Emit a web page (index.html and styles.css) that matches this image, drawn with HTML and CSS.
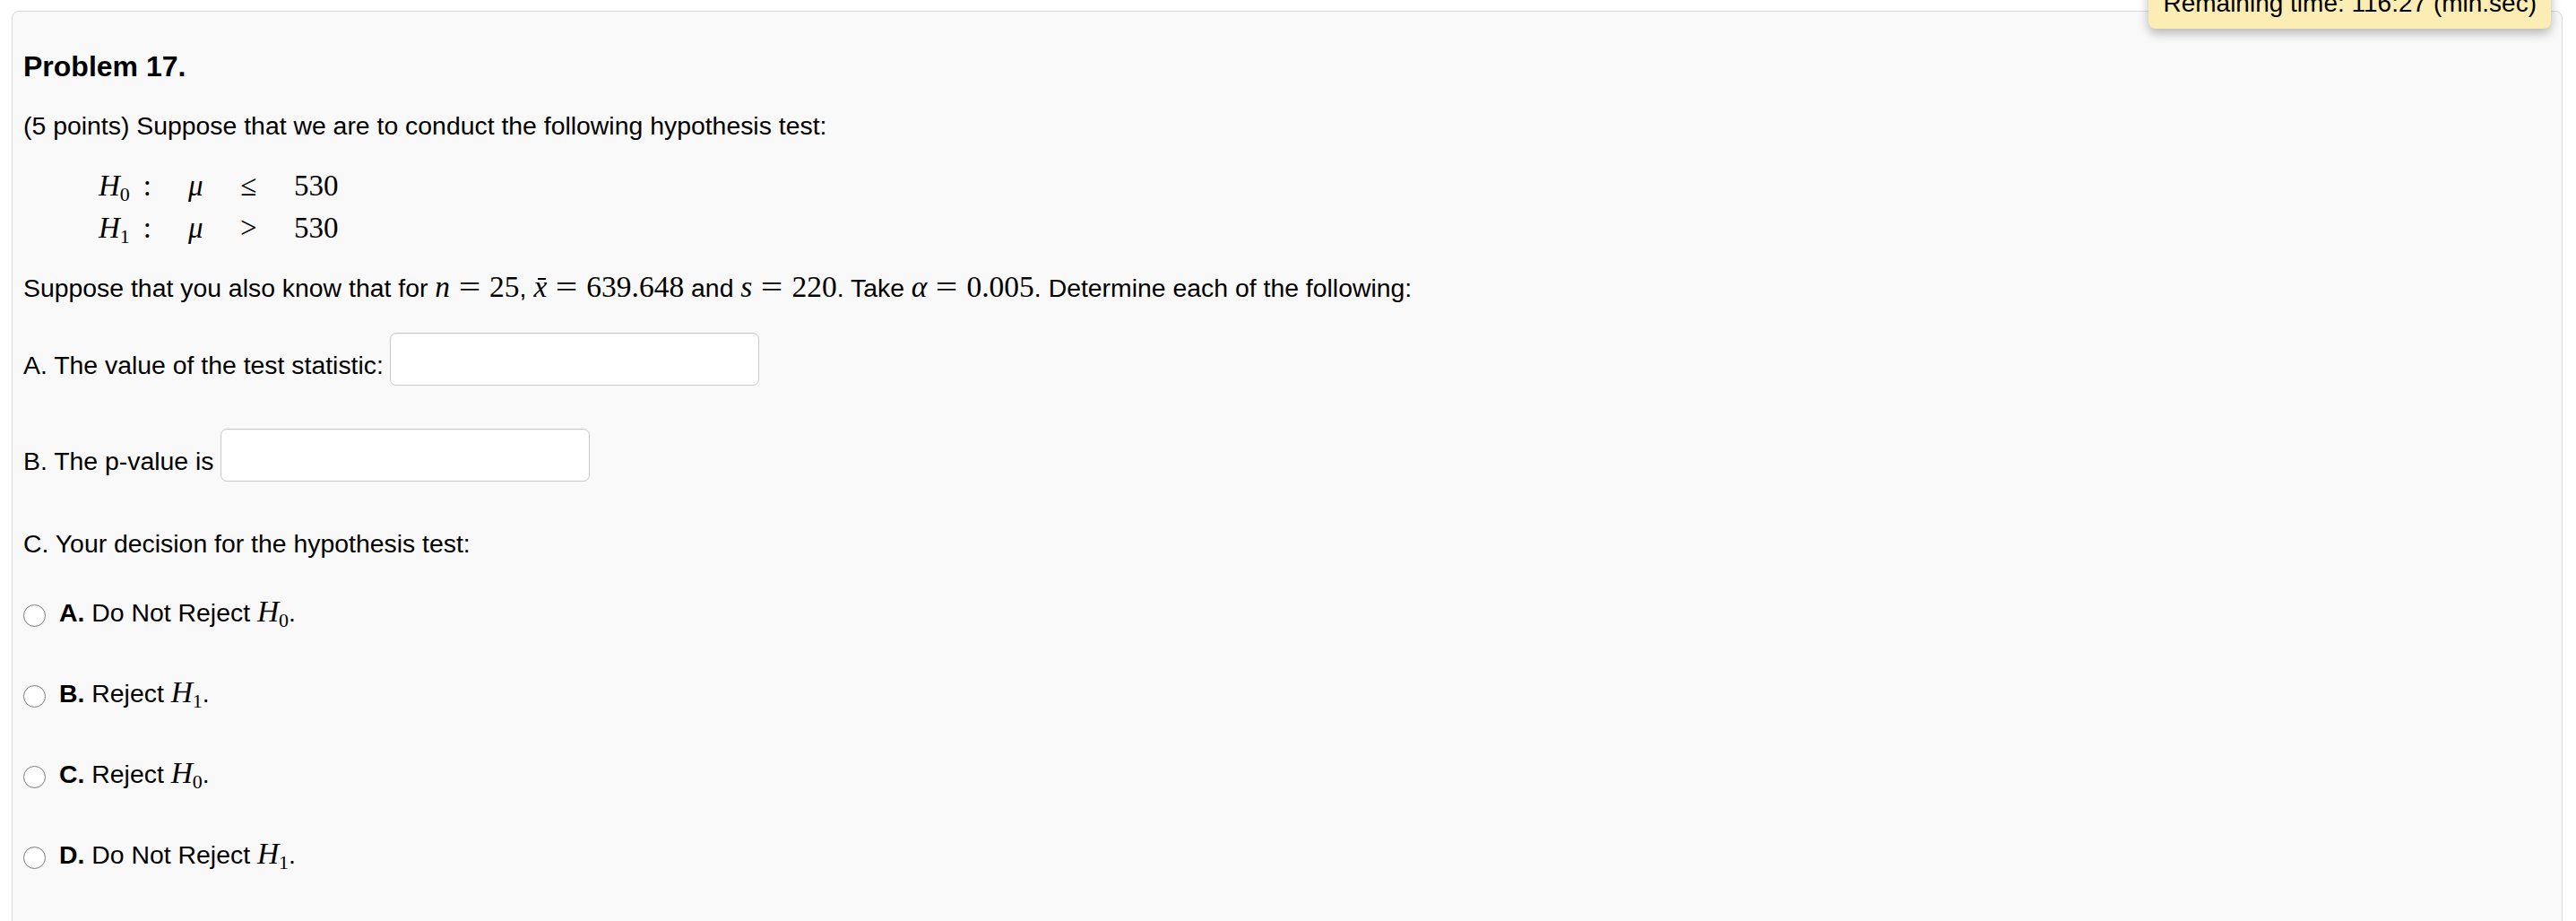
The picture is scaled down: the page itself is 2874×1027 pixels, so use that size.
FILE: index.html
```html
<!DOCTYPE html>
<html lang="en">
<head>
<meta charset="utf-8">
<title>Problem 17</title>
<link rel="stylesheet" href="styles.css">
</head>
<body>
<div class="timer">Remaining time: 116:27 (min.sec)</div>
<div class="panel">
  <div class="title">Problem 17.</div>
  <p class="intro">(5 points) Suppose that we are to conduct the following hypothesis test:</p>
  <div class="hyp">
    <span class="hc1"><i>H</i><span class="sub">0</span><span class="colon">:</span></span><span><i>μ</i></span><span>≤</span><span>530</span>
    <span class="hc1"><i>H</i><span class="sub">1</span><span class="colon">:</span></span><span><i>μ</i></span><span>&gt;</span><span>530</span>
  </div>
  <p class="given">Suppose that you also know that for <span class="m"><i>n</i><span class="rel">=</span>25</span>, <span class="m"><span class="xbar">x</span><span class="rel">=</span>639.648</span> and <span class="m"><i>s</i><span class="rel">=</span>220</span>. Take <span class="m"><i>α</i><span class="rel">=</span>0.005</span>. Determine each of the following:</p>
  <div class="ans ans-a"><span class="lbl">A. The value of the test statistic:</span><input class="box" type="text" aria-label="test statistic"></div>
  <div class="ans ans-b"><span class="lbl">B. The p-value is</span><input class="box" type="text" aria-label="p-value"></div>
  <p class="decision">C. Your decision for the hypothesis test:</p>
  <div class="opt opt-first"><input class="radio" type="radio" name="dec"><b>A.</b> Do Not Reject <span class="m"><i>H</i><span class="sub">0</span></span>.</div>
  <div class="opt"><input class="radio" type="radio" name="dec"><b>B.</b> Reject <span class="m"><i>H</i><span class="sub">1</span></span>.</div>
  <div class="opt"><input class="radio" type="radio" name="dec"><b>C.</b> Reject <span class="m"><i>H</i><span class="sub">0</span></span>.</div>
  <div class="opt"><input class="radio" type="radio" name="dec"><b>D.</b> Do Not Reject <span class="m"><i>H</i><span class="sub">1</span></span>.</div>
</div>
</body>
</html>
```
FILE: styles.css
```css
html, body {
  margin: 0;
  padding: 0;
  background: #ffffff;
}
body {
  font-family: "Liberation Sans", Arial, Helvetica, sans-serif;
  font-size: 28.4px;
  line-height: 40px;
  color: #000;
  height: 1027px;
  overflow: hidden;
  position: relative;
}
.timer {
  position: absolute;
  top: -24px;
  right: 28px;
  font-size: 28px;
  background: #fcedb4;
  padding: 8px 16px;
  border-radius: 8px;
  box-shadow: 0 5px 12px rgba(0, 0, 0, 0.28);
  white-space: nowrap;
  z-index: 2;
}
.panel {
  margin: 12px 15px 0 13px;
  border: 1px solid #dadada;
  border-radius: 8px;
  background: #f9f9f9;
  padding: 41px 12px 0 12px;
  height: 1100px;
  box-sizing: border-box;
}
.title {
  font-weight: bold;
  font-size: 32px;
  line-height: 40px;
}
p {
  margin: 0;
}
.intro {
  margin-top: 26px;
}
.hyp {
  margin-top: 24px;
  margin-left: 84px;
  display: grid;
  grid-template-columns: 100px 58px 60px auto;
  font-family: "Liberation Serif", "Times New Roman", serif;
  font-size: 33px;
  line-height: 47px;
}
.hyp i, .m i, .xbar {
  font-style: italic;
}
.colon {
  margin-left: 15px;
}
.sub {
  font-size: 22px;
  vertical-align: -6px;
  line-height: 0;
  font-style: normal;
}
.given {
  margin-top: 23px;
}
.m {
  font-family: "Liberation Serif", "Times New Roman", serif;
  font-size: 33.5px;
  line-height: 1;
}
.rel {
  display: inline-block;
  width: 0.778em;
  margin: 0 9px;
  text-align: center;
  transform: scaleX(1.3);
}
.xbar {
  position: relative;
}
.xbar::after {
  content: "";
  position: absolute;
  left: 5px;
  right: 1px;
  top: 9px;
  border-top: 2px solid #000;
}
.ans {
  display: flex;
  align-items: flex-start;
}
.ans .lbl {
  margin-top: 16px;
  white-space: nowrap;
}
.ans-a {
  margin-top: 30px;
}
.ans-b {
  margin-top: 48px;
}
.box {
  width: 412px;
  height: 59px;
  box-sizing: border-box;
  margin: 0 0 0 7px;
  padding: 0 12px;
  border: 1px solid #c9c9c9;
  border-radius: 7px;
  background: #fff;
  box-shadow: inset 0 1px 1px rgba(0, 0, 0, 0.06);
  font: 28px "Liberation Sans", Arial, sans-serif;
}
.decision {
  margin-top: 49px;
}
.opt {
  margin-top: 50px;
}
.opt-first {
  margin-top: 37px;
}
.radio {
  -webkit-appearance: none;
  appearance: none;
  width: 25px;
  height: 25px;
  margin: 0 15px 0 0;
  border: 1.5px solid #7a7a7a;
  border-radius: 50%;
  background: #fff;
  vertical-align: -6px;
  box-sizing: border-box;
}
```
